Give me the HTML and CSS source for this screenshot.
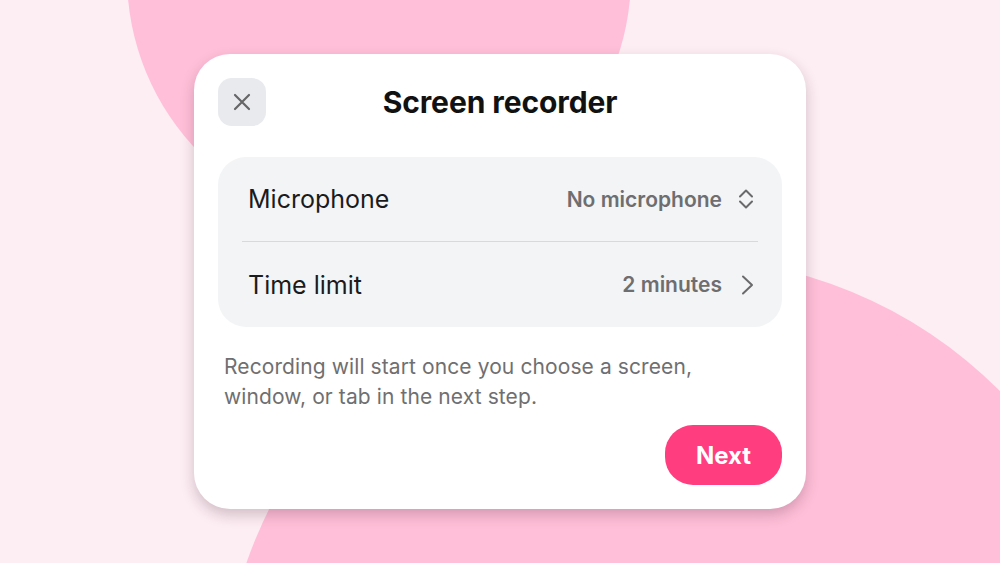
FILE: index.html
```html
<!DOCTYPE html>
<html lang="en">
<head>
<meta charset="utf-8">
<title>Screen recorder</title>
<link rel="stylesheet" href="styles.css">
</head>
<body>
<div class="backdrop">
  <div class="blob blob-top"></div>
  <div class="blob blob-bottom"></div>
</div>
<main class="card">
  <header class="card-header">
    <button class="close-btn" aria-label="Close">
      <svg width="18" height="18" viewBox="0 0 18 18" fill="none" stroke="currentColor" stroke-width="2.2" stroke-linecap="round">
        <path d="M2 2 L16 16 M16 2 L2 16"/>
      </svg>
    </button>
    <h1 class="title">Screen recorder</h1>
    <span class="header-spacer"></span>
  </header>
  <section class="panel">
    <div class="row">
      <span class="row-label">Microphone</span>
      <span class="row-value">No microphone
        <svg class="icon-updown" width="16" height="20" viewBox="0 0 16 20" fill="none" stroke="currentColor" stroke-width="2" stroke-linecap="round" stroke-linejoin="round">
          <path d="M2 7.5 L8 1.5 L14 7.5"/>
          <path d="M2 12.5 L8 18.5 L14 12.5"/>
        </svg>
      </span>
    </div>
    <div class="divider"></div>
    <div class="row">
      <span class="row-label">Time limit</span>
      <span class="row-value">2 minutes
        <svg class="icon-right" width="16" height="20" viewBox="0 0 16 20" fill="none" stroke="currentColor" stroke-width="2" stroke-linecap="round" stroke-linejoin="round">
          <path d="M5 1.5 L14 10 L5 18.5"/>
        </svg>
      </span>
    </div>
  </section>
  <p class="description">Recording will start once you choose a screen, window, or tab in the next step.</p>
  <div class="actions">
    <button class="next-btn">Next</button>
  </div>
</main>
</body>
</html>
```

FILE: styles.css
```css
* { box-sizing: border-box; }

html, body {
  margin: 0;
  padding: 0;
  height: 100%;
}

body {
  background: #fdeef3;
  font-family: Inter, "Noto Sans", "Liberation Sans", sans-serif;
  display: flex;
  align-items: center;
  justify-content: center;
  overflow: hidden;
  position: relative;
}

.backdrop {
  position: absolute;
  inset: 0;
  overflow: hidden;
}

.blob {
  position: absolute;
  border-radius: 50%;
  background: #ffbfd8;
}

.blob-top {
  left: 127px;
  top: -276px;
  width: 504px;
  height: 504px;
}

.blob-bottom {
  left: 221px;
  top: 257px;
  width: 912px;
  height: 912px;
}

.card {
  position: relative;
  z-index: 1;
  width: 612px;
  height: 455px;
  background: #ffffff;
  border-radius: 36px;
  padding: 24px;
  box-shadow: 0 6px 14px rgba(60, 20, 40, 0.22);
  display: flex;
  flex-direction: column;
}

.card-header {
  display: flex;
  align-items: center;
  height: 48px;
}

.close-btn {
  width: 48px;
  height: 48px;
  border: none;
  border-radius: 14px;
  background: #e9eaee;
  color: #666666;
  display: flex;
  align-items: center;
  justify-content: center;
  padding: 0;
  flex: none;
}

.title {
  flex: 1;
  margin: 0;
  text-align: center;
  font-size: 30px;
  font-weight: 700;
  color: #111111;
  letter-spacing: -0.1px;
}

.header-spacer {
  width: 48px;
  flex: none;
}

.panel {
  margin-top: 31px;
  background: #f3f4f6;
  border-radius: 28px;
  display: flex;
  flex-direction: column;
}

.row {
  height: 84px;
  display: flex;
  align-items: center;
  justify-content: space-between;
  padding: 0 28px 0 30px;
}

.row + .divider + .row {
  height: 85px;
}

.divider {
  height: 1px;
  background: #d9d9dd;
  margin: 0 24px;
}

.row-label {
  font-size: 25px;
  color: #1b1b1d;
}

.row-value {
  display: flex;
  align-items: center;
  gap: 16px;
  font-size: 21px;
  font-weight: 600;
  color: #6e6e70;
}

.row-value svg {
  color: #6a6a6c;
}

.description {
  margin: 25px 0 0 6px;
  font-size: 21px;
  line-height: 30px;
  letter-spacing: 0.1px;
  color: #6f6f71;
  width: 500px;
}

.actions {
  margin-top: 13px;
  display: flex;
  justify-content: flex-end;
}

.next-btn {
  width: 117px;
  height: 60px;
  border: none;
  border-radius: 28px;
  background: #ff3d7f;
  color: #ffffff;
  font-family: inherit;
  font-size: 24px;
  font-weight: 700;
  padding: 0;
}
```
